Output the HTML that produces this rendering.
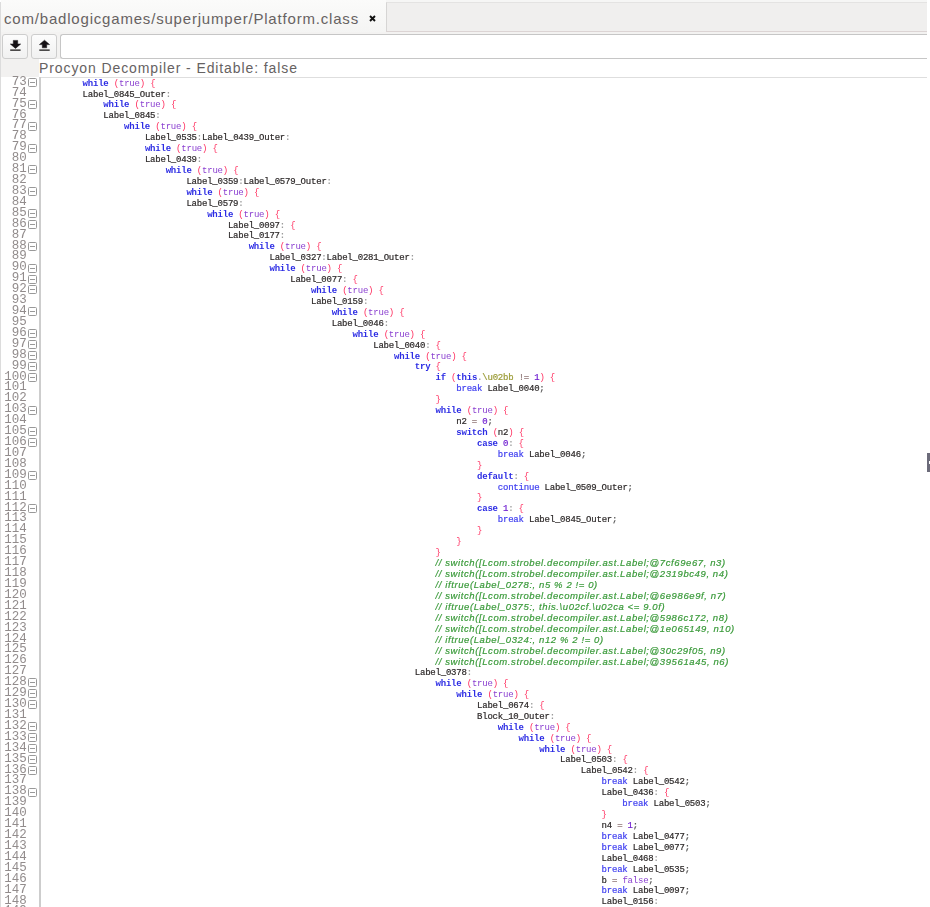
<!DOCTYPE html>
<html><head><meta charset="utf-8">
<style>
html,body{margin:0;padding:0;}
body{width:930px;height:907px;overflow:hidden;position:relative;background:#fff;font-family:"Liberation Sans",sans-serif;}
.abs{position:absolute;}
#wrap{position:absolute;left:0;top:0;width:930px;height:907px;overflow:hidden;filter:blur(0.35px);}
#lborder{position:absolute;left:0;top:2px;width:1px;height:905px;background:#dcdcdc;}
#tabbar{position:absolute;left:1px;top:0;width:926px;height:34px;background:#f6f6f5;}
#tab{position:absolute;left:1px;top:0;width:385px;height:34px;background:linear-gradient(#fbfbfa,#f4f4f3);}
#tabtext{position:absolute;left:4px;top:10px;font-size:15px;color:#676262;white-space:nowrap;letter-spacing:0.81px;}
#tabx{position:absolute;left:368.5px;top:15px;width:7px;height:7px;}
#inact{position:absolute;left:386px;top:2px;width:541px;height:29px;background:#f0efee;border-left:1px solid #d6d5d4;border-top:1px solid #e4e3e2;box-sizing:border-box;}
#inactline{position:absolute;left:386px;top:31px;width:541px;height:1px;background:#dcd4d4;}
#toolbar{position:absolute;left:1px;top:32px;width:926px;height:27px;background:#f3f2f1;}
.btn{position:absolute;top:34px;width:26px;height:25px;box-sizing:border-box;border:1px solid #cdcdcd;border-radius:3px;background:linear-gradient(#fcfcfc,#f1f1f1);}
#input{position:absolute;left:60px;top:34px;width:867px;height:25px;box-sizing:border-box;border:1px solid #c6c6c6;border-right:none;border-radius:3px 0 0 3px;background:#fff;}
#hdrleft{position:absolute;left:1px;top:59px;width:38px;height:18px;background:#f2f1f0;}
#hdr{position:absolute;left:39px;top:59px;width:888px;height:18px;background:#fff;}
#hdrtext{position:absolute;left:39px;top:60px;font-size:14px;color:#666262;white-space:nowrap;letter-spacing:0.9px;}
#hdrline{position:absolute;left:39px;top:77px;width:888px;height:1px;background:#dedede;}
#gutline{position:absolute;left:39px;top:77px;width:1.5px;height:830px;background:#cdcdcd;}
.ln{position:absolute;height:11px;line-height:13px;white-space:pre;font-family:"Liberation Mono",monospace;font-size:9px;color:#2e2a2a;letter-spacing:-0.21px;-webkit-text-stroke-width:0.2px;}
.ln.cm{font-family:"Liberation Sans",sans-serif;font-style:italic;color:#3a9a3a;font-size:9.5px;letter-spacing:0.6px;margin-top:-1.6px;}
.k{color:#2c2ce4;font-weight:bold;-webkit-text-stroke-width:0px;}
.k2{color:#4040f0;}
.b{color:#8a3fd0;-webkit-text-stroke-width:0;}
.s{color:#ff3060;-webkit-text-stroke-width:0;}
.p{color:#9a9a9a;}
.d{color:#555;}
.n{color:#7020d0;}
.o{color:#907878;}
.u{color:#9c9c38;}
.num{position:absolute;left:0;width:26.7px;text-align:right;font-family:"Liberation Mono",monospace;font-size:12.5px;line-height:11px;height:11px;color:#928c8c;}
.fold{position:absolute;left:28px;width:9px;height:9px;box-sizing:border-box;border:1.4px solid #999;border-radius:1.5px;background:#fff;}
.fold::after{content:"";position:absolute;left:1.2px;right:1.2px;top:2.6px;height:1.3px;background:#999;}
#rmark{position:absolute;left:927px;top:453px;width:3px;height:19px;background:#6c6b7a;}
#rmark2{position:absolute;left:929px;top:461px;width:1px;height:3px;background:#fff;}
</style></head><body>
<div id="wrap">
<div id="tabbar"></div>
<div id="tab"></div>
<div id="inact"></div>
<div id="inactline"></div>
<div id="tabtext">com/badlogicgames/superjumper/Platform.class</div>
<svg id="tabx" viewBox="0 0 7 7"><path d="M1 1L6 6M6 1L1 6" stroke="#111" stroke-width="1.9"/></svg>
<div id="toolbar"></div>
<div class="btn" style="left:2px"></div>
<div class="btn" style="left:31px"></div>
<svg class="abs" style="left:0;top:0" width="60" height="60">
  <path d="M13.3 40.4h4.4v3.6h3l-5.2 4.4l-5.2-4.4h3z" fill="#141014" stroke="#141014" stroke-width="0.5" stroke-linejoin="round"/>
  <rect x="10.2" y="49.4" width="10.4" height="1.5" fill="#3a3838"/>
  <path d="M44.5 40.2l5.1 4.4h-2.9v3.2h-4.4v-3.2h-2.9z" fill="#141014" stroke="#141014" stroke-width="0.5" stroke-linejoin="round"/>
  <rect x="39.3" y="49.4" width="10.4" height="1.5" fill="#3a3838"/>
</svg>
<div id="input"></div>
<div id="hdrleft"></div>
<div id="hdr"></div>
<div id="hdrtext">Procyon Decompiler - Editable: false</div>
<div id="hdrline"></div>
<div id="gutline"></div>
<div id="lborder"></div>
<div class="ln" style="top:77.60px;left:82.60px"><span class="k">while</span> <span class="s">(</span><span class="b">true</span><span class="s">)</span> <span class="s">{</span></div>
<div class="num" style="top:76.80px">73</div>
<div class="fold" style="top:78px"></div>
<div class="ln" style="top:88.52px;left:82.60px">Label_0845_Outer<span class="p">:</span></div>
<div class="num" style="top:87.72px">74</div>
<div class="ln" style="top:99.43px;left:103.36px"><span class="k">while</span> <span class="s">(</span><span class="b">true</span><span class="s">)</span> <span class="s">{</span></div>
<div class="num" style="top:98.63px">75</div>
<div class="fold" style="top:100px"></div>
<div class="ln" style="top:110.35px;left:103.36px">Label_0845<span class="p">:</span></div>
<div class="num" style="top:109.55px">76</div>
<div class="ln" style="top:121.27px;left:124.12px"><span class="k">while</span> <span class="s">(</span><span class="b">true</span><span class="s">)</span> <span class="s">{</span></div>
<div class="num" style="top:120.47px">77</div>
<div class="fold" style="top:122px"></div>
<div class="ln" style="top:132.19px;left:144.88px">Label_0535<span class="p">:</span>Label_0439_Outer<span class="p">:</span></div>
<div class="num" style="top:131.38px">78</div>
<div class="ln" style="top:143.10px;left:144.88px"><span class="k">while</span> <span class="s">(</span><span class="b">true</span><span class="s">)</span> <span class="s">{</span></div>
<div class="num" style="top:142.30px">79</div>
<div class="fold" style="top:144px"></div>
<div class="ln" style="top:154.02px;left:144.88px">Label_0439<span class="p">:</span></div>
<div class="num" style="top:153.22px">80</div>
<div class="ln" style="top:164.94px;left:165.64px"><span class="k">while</span> <span class="s">(</span><span class="b">true</span><span class="s">)</span> <span class="s">{</span></div>
<div class="num" style="top:164.14px">81</div>
<div class="fold" style="top:165px"></div>
<div class="ln" style="top:175.85px;left:186.40px">Label_0359<span class="p">:</span>Label_0579_Outer<span class="p">:</span></div>
<div class="num" style="top:175.05px">82</div>
<div class="ln" style="top:186.77px;left:186.40px"><span class="k">while</span> <span class="s">(</span><span class="b">true</span><span class="s">)</span> <span class="s">{</span></div>
<div class="num" style="top:185.97px">83</div>
<div class="fold" style="top:187px"></div>
<div class="ln" style="top:197.69px;left:186.40px">Label_0579<span class="p">:</span></div>
<div class="num" style="top:196.89px">84</div>
<div class="ln" style="top:208.60px;left:207.16px"><span class="k">while</span> <span class="s">(</span><span class="b">true</span><span class="s">)</span> <span class="s">{</span></div>
<div class="num" style="top:207.80px">85</div>
<div class="fold" style="top:209px"></div>
<div class="ln" style="top:219.52px;left:227.92px">Label_0097<span class="p">:</span> <span class="s">{</span></div>
<div class="num" style="top:218.72px">86</div>
<div class="fold" style="top:220px"></div>
<div class="ln" style="top:230.44px;left:227.92px">Label_0177<span class="p">:</span></div>
<div class="num" style="top:229.64px">87</div>
<div class="ln" style="top:241.36px;left:248.68px"><span class="k">while</span> <span class="s">(</span><span class="b">true</span><span class="s">)</span> <span class="s">{</span></div>
<div class="num" style="top:240.56px">88</div>
<div class="fold" style="top:242px"></div>
<div class="ln" style="top:252.27px;left:269.44px">Label_0327<span class="p">:</span>Label_0281_Outer<span class="p">:</span></div>
<div class="num" style="top:251.47px">89</div>
<div class="ln" style="top:263.19px;left:269.44px"><span class="k">while</span> <span class="s">(</span><span class="b">true</span><span class="s">)</span> <span class="s">{</span></div>
<div class="num" style="top:262.39px">90</div>
<div class="fold" style="top:264px"></div>
<div class="ln" style="top:274.11px;left:290.20px">Label_0077<span class="p">:</span> <span class="s">{</span></div>
<div class="num" style="top:273.31px">91</div>
<div class="fold" style="top:275px"></div>
<div class="ln" style="top:285.02px;left:310.96px"><span class="k">while</span> <span class="s">(</span><span class="b">true</span><span class="s">)</span> <span class="s">{</span></div>
<div class="num" style="top:284.22px">92</div>
<div class="fold" style="top:285px"></div>
<div class="ln" style="top:295.94px;left:310.96px">Label_0159<span class="p">:</span></div>
<div class="num" style="top:295.14px">93</div>
<div class="ln" style="top:306.86px;left:331.72px"><span class="k">while</span> <span class="s">(</span><span class="b">true</span><span class="s">)</span> <span class="s">{</span></div>
<div class="num" style="top:306.06px">94</div>
<div class="fold" style="top:307px"></div>
<div class="ln" style="top:317.77px;left:331.72px">Label_0046<span class="p">:</span></div>
<div class="num" style="top:316.97px">95</div>
<div class="ln" style="top:328.69px;left:352.48px"><span class="k">while</span> <span class="s">(</span><span class="b">true</span><span class="s">)</span> <span class="s">{</span></div>
<div class="num" style="top:327.89px">96</div>
<div class="fold" style="top:329px"></div>
<div class="ln" style="top:339.61px;left:373.24px">Label_0040<span class="p">:</span> <span class="s">{</span></div>
<div class="num" style="top:338.81px">97</div>
<div class="fold" style="top:340px"></div>
<div class="ln" style="top:350.53px;left:394.00px"><span class="k">while</span> <span class="s">(</span><span class="b">true</span><span class="s">)</span> <span class="s">{</span></div>
<div class="num" style="top:349.73px">98</div>
<div class="fold" style="top:351px"></div>
<div class="ln" style="top:361.44px;left:414.76px"><span class="k">try</span> <span class="s">{</span></div>
<div class="num" style="top:360.64px">99</div>
<div class="fold" style="top:362px"></div>
<div class="ln" style="top:372.36px;left:435.52px"><span class="k">if</span> <span class="s">(</span><span class="k">this</span><span class="p">.</span><span class="u">\u02bb</span> <span class="o">!=</span> <span class="n">1</span><span class="s">)</span> <span class="s">{</span></div>
<div class="num" style="top:371.56px">100</div>
<div class="fold" style="top:373px"></div>
<div class="ln" style="top:383.28px;left:456.28px"><span class="k2">break</span> Label_0040<span class="d">;</span></div>
<div class="num" style="top:382.48px">101</div>
<div class="ln" style="top:394.19px;left:435.52px"><span class="s">}</span></div>
<div class="num" style="top:393.39px">102</div>
<div class="ln" style="top:405.11px;left:435.52px"><span class="k">while</span> <span class="s">(</span><span class="b">true</span><span class="s">)</span> <span class="s">{</span></div>
<div class="num" style="top:404.31px">103</div>
<div class="fold" style="top:406px"></div>
<div class="ln" style="top:416.03px;left:456.28px">n2 <span class="o">=</span> <span class="n">0</span><span class="d">;</span></div>
<div class="num" style="top:415.23px">104</div>
<div class="ln" style="top:426.94px;left:456.28px"><span class="k">switch</span> <span class="s">(</span>n2<span class="s">)</span> <span class="s">{</span></div>
<div class="num" style="top:426.14px">105</div>
<div class="fold" style="top:427px"></div>
<div class="ln" style="top:437.86px;left:477.04px"><span class="k">case</span> <span class="n">0</span><span class="p">:</span> <span class="s">{</span></div>
<div class="num" style="top:437.06px">106</div>
<div class="fold" style="top:438px"></div>
<div class="ln" style="top:448.78px;left:497.80px"><span class="k2">break</span> Label_0046<span class="d">;</span></div>
<div class="num" style="top:447.98px">107</div>
<div class="ln" style="top:459.69px;left:477.04px"><span class="s">}</span></div>
<div class="num" style="top:458.89px">108</div>
<div class="ln" style="top:470.61px;left:477.04px"><span class="k">default</span><span class="p">:</span> <span class="s">{</span></div>
<div class="num" style="top:469.81px">109</div>
<div class="fold" style="top:471px"></div>
<div class="ln" style="top:481.53px;left:497.80px"><span class="k2">continue</span> Label_0509_Outer<span class="d">;</span></div>
<div class="num" style="top:480.73px">110</div>
<div class="ln" style="top:492.45px;left:477.04px"><span class="s">}</span></div>
<div class="num" style="top:491.65px">111</div>
<div class="ln" style="top:503.36px;left:477.04px"><span class="k">case</span> <span class="n">1</span><span class="p">:</span> <span class="s">{</span></div>
<div class="num" style="top:502.56px">112</div>
<div class="fold" style="top:504px"></div>
<div class="ln" style="top:514.28px;left:497.80px"><span class="k2">break</span> Label_0845_Outer<span class="d">;</span></div>
<div class="num" style="top:513.48px">113</div>
<div class="ln" style="top:525.20px;left:477.04px"><span class="s">}</span></div>
<div class="num" style="top:524.40px">114</div>
<div class="ln" style="top:536.11px;left:456.28px"><span class="s">}</span></div>
<div class="num" style="top:535.31px">115</div>
<div class="ln" style="top:547.03px;left:435.52px"><span class="s">}</span></div>
<div class="num" style="top:546.23px">116</div>
<div class="ln cm" style="top:557.95px;left:435.52px"><span class="c">// switch([Lcom.strobel.decompiler.ast.Label;@7cf69e67, n3)</span></div>
<div class="num" style="top:557.15px">117</div>
<div class="ln cm" style="top:568.86px;left:435.52px"><span class="c">// switch([Lcom.strobel.decompiler.ast.Label;@2319bc49, n4)</span></div>
<div class="num" style="top:568.06px">118</div>
<div class="ln cm" style="top:579.78px;left:435.52px"><span class="c">// iftrue(Label_0278:, n5 % 2 != 0)</span></div>
<div class="num" style="top:578.98px">119</div>
<div class="ln cm" style="top:590.70px;left:435.52px"><span class="c">// switch([Lcom.strobel.decompiler.ast.Label;@6e986e9f, n7)</span></div>
<div class="num" style="top:589.90px">120</div>
<div class="ln cm" style="top:601.62px;left:435.52px"><span class="c">// iftrue(Label_0375:, this.\u02cf.\u02ca &lt;= 9.0f)</span></div>
<div class="num" style="top:600.82px">121</div>
<div class="ln cm" style="top:612.53px;left:435.52px"><span class="c">// switch([Lcom.strobel.decompiler.ast.Label;@5986c172, n8)</span></div>
<div class="num" style="top:611.73px">122</div>
<div class="ln cm" style="top:623.45px;left:435.52px"><span class="c">// switch([Lcom.strobel.decompiler.ast.Label;@1e065149, n10)</span></div>
<div class="num" style="top:622.65px">123</div>
<div class="ln cm" style="top:634.37px;left:435.52px"><span class="c">// iftrue(Label_0324:, n12 % 2 != 0)</span></div>
<div class="num" style="top:633.57px">124</div>
<div class="ln cm" style="top:645.28px;left:435.52px"><span class="c">// switch([Lcom.strobel.decompiler.ast.Label;@30c29f05, n9)</span></div>
<div class="num" style="top:644.48px">125</div>
<div class="ln cm" style="top:656.20px;left:435.52px"><span class="c">// switch([Lcom.strobel.decompiler.ast.Label;@39561a45, n6)</span></div>
<div class="num" style="top:655.40px">126</div>
<div class="ln" style="top:667.12px;left:414.76px">Label_0378<span class="p">:</span></div>
<div class="num" style="top:666.32px">127</div>
<div class="ln" style="top:678.03px;left:435.52px"><span class="k">while</span> <span class="s">(</span><span class="b">true</span><span class="s">)</span> <span class="s">{</span></div>
<div class="num" style="top:677.23px">128</div>
<div class="fold" style="top:678px"></div>
<div class="ln" style="top:688.95px;left:456.28px"><span class="k">while</span> <span class="s">(</span><span class="b">true</span><span class="s">)</span> <span class="s">{</span></div>
<div class="num" style="top:688.15px">129</div>
<div class="fold" style="top:689px"></div>
<div class="ln" style="top:699.87px;left:477.04px">Label_0674<span class="p">:</span> <span class="s">{</span></div>
<div class="num" style="top:699.07px">130</div>
<div class="fold" style="top:700px"></div>
<div class="ln" style="top:710.79px;left:477.04px">Block_10_Outer<span class="p">:</span></div>
<div class="num" style="top:709.99px">131</div>
<div class="ln" style="top:721.70px;left:497.80px"><span class="k">while</span> <span class="s">(</span><span class="b">true</span><span class="s">)</span> <span class="s">{</span></div>
<div class="num" style="top:720.90px">132</div>
<div class="fold" style="top:722px"></div>
<div class="ln" style="top:732.62px;left:518.56px"><span class="k">while</span> <span class="s">(</span><span class="b">true</span><span class="s">)</span> <span class="s">{</span></div>
<div class="num" style="top:731.82px">133</div>
<div class="fold" style="top:733px"></div>
<div class="ln" style="top:743.54px;left:539.32px"><span class="k">while</span> <span class="s">(</span><span class="b">true</span><span class="s">)</span> <span class="s">{</span></div>
<div class="num" style="top:742.74px">134</div>
<div class="fold" style="top:744px"></div>
<div class="ln" style="top:754.45px;left:560.08px">Label_0503<span class="p">:</span> <span class="s">{</span></div>
<div class="num" style="top:753.65px">135</div>
<div class="fold" style="top:755px"></div>
<div class="ln" style="top:765.37px;left:580.84px">Label_0542<span class="p">:</span> <span class="s">{</span></div>
<div class="num" style="top:764.57px">136</div>
<div class="fold" style="top:766px"></div>
<div class="ln" style="top:776.29px;left:601.60px"><span class="k2">break</span> Label_0542<span class="d">;</span></div>
<div class="num" style="top:775.49px">137</div>
<div class="ln" style="top:787.20px;left:601.60px">Label_0436<span class="p">:</span> <span class="s">{</span></div>
<div class="num" style="top:786.40px">138</div>
<div class="fold" style="top:788px"></div>
<div class="ln" style="top:798.12px;left:622.36px"><span class="k2">break</span> Label_0503<span class="d">;</span></div>
<div class="num" style="top:797.32px">139</div>
<div class="ln" style="top:809.04px;left:601.60px"><span class="s">}</span></div>
<div class="num" style="top:808.24px">140</div>
<div class="ln" style="top:819.96px;left:601.60px">n4 <span class="o">=</span> <span class="n">1</span><span class="d">;</span></div>
<div class="num" style="top:819.16px">141</div>
<div class="ln" style="top:830.87px;left:601.60px"><span class="k2">break</span> Label_0477<span class="d">;</span></div>
<div class="num" style="top:830.07px">142</div>
<div class="ln" style="top:841.79px;left:601.60px"><span class="k2">break</span> Label_0077<span class="d">;</span></div>
<div class="num" style="top:840.99px">143</div>
<div class="ln" style="top:852.71px;left:601.60px">Label_0468<span class="p">:</span></div>
<div class="num" style="top:851.91px">144</div>
<div class="ln" style="top:863.62px;left:601.60px"><span class="k2">break</span> Label_0535<span class="d">;</span></div>
<div class="num" style="top:862.82px">145</div>
<div class="ln" style="top:874.54px;left:601.60px">b <span class="o">=</span> <span class="b">false</span><span class="d">;</span></div>
<div class="num" style="top:873.74px">146</div>
<div class="ln" style="top:885.46px;left:601.60px"><span class="k2">break</span> Label_0097<span class="d">;</span></div>
<div class="num" style="top:884.66px">147</div>
<div class="ln" style="top:896.37px;left:601.60px">Label_0156<span class="p">:</span></div>
<div class="num" style="top:895.57px">148</div>
<div class="num" style="top:906.49px">149</div>
<div id="rmark"></div><div id="rmark2"></div>
</div>
</body></html>
